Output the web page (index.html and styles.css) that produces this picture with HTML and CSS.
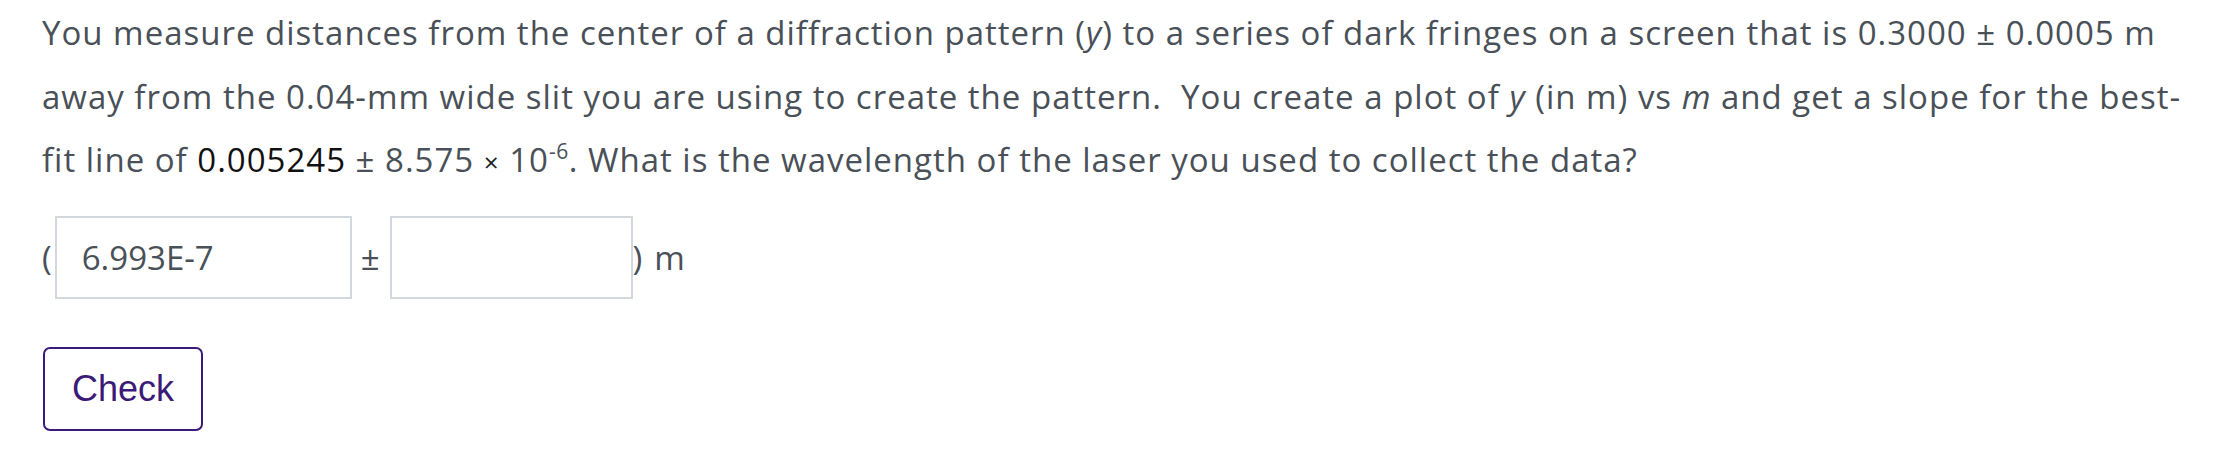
FILE: index.html
```html
<!DOCTYPE html>
<html lang="en">
<head>
<meta charset="utf-8">
<title>Diffraction question</title>
<link rel="stylesheet" href="styles.css">
</head>
<body>
<div class="problem">
  <p class="question">You measure distances from the center of a diffraction pattern (<i>y</i>) to a series of dark fringes on a screen that is 0.3000 ± 0.0005 m away from the 0.04-mm wide slit you are using to create the pattern.&nbsp; You create a plot of <i>y</i> (in m) vs <i>m</i> and get a slope for the best-fit line of <span class="num">0.005245</span> ± 8.575 <span class="times">×</span> 10<sup>-6</sup>. What is the wavelength of the laser you used to collect the data?</p>
  <div class="answer-row">
    <span class="paren">(</span>
    <input class="ans ans-value" type="text" value="6.993E-7" aria-label="value">
    <span class="pm">±</span>
    <input class="ans ans-unc" type="text" value="" aria-label="uncertainty">
    <span class="paren">)</span>
    <span class="unit">m</span>
  </div>
  <button class="check" type="button">Check</button>
</div>
</body>
</html>
```
FILE: styles.css
```css
html, body {
  margin: 0;
  padding: 0;
  background: #ffffff;
}

.problem {
  padding: 1px 43px 0 42px;
  font-family: "Open Sans", "Noto Sans", sans-serif;
  color: #495057;
}

.question {
  margin: 0;
  font-size: 33px;
  line-height: 63.5px;
  letter-spacing: 1px;
}

.question i {
  font-style: italic;
}

.num {
  color: #111111;
}

.times {
  color: #222222;
  font-size: 26px;
}

.question sup {
  font-size: 21px;
  line-height: 0;
  vertical-align: 13px;
  letter-spacing: 0.5px;
}

.answer-row {
  display: flex;
  align-items: center;
  margin-top: 21px;
  font-size: 33px;
  height: 83px;
}

.paren {
  margin-right: 3px;
}

.ans {
  box-sizing: border-box;
  height: 83px;
  border: 2px solid #d3d8dd;
  border-radius: 0;
  background: #ffffff;
  padding: 0 0 0 25px;
  margin: 0;
  font-family: "Open Sans", "Noto Sans", sans-serif;
  font-size: 33px;
  color: #495057;
  outline: none;
}

.ans-value {
  width: 297px;
}

.ans-unc {
  width: 243px;
}

.pm {
  margin: 0 10px 0 9px;
}

.paren + .unit,
.unit {
  margin-left: 9px;
}

.check {
  display: block;
  box-sizing: border-box;
  margin-top: 48px;
  margin-left: 1px;
  width: 160px;
  height: 84px;
  padding: 0;
  border: 2px solid #3c1a78;
  border-radius: 7px;
  background: #ffffff;
  color: #3c1a78;
  font-family: "Liberation Sans", Arial, sans-serif;
  font-size: 36px;
}
```
